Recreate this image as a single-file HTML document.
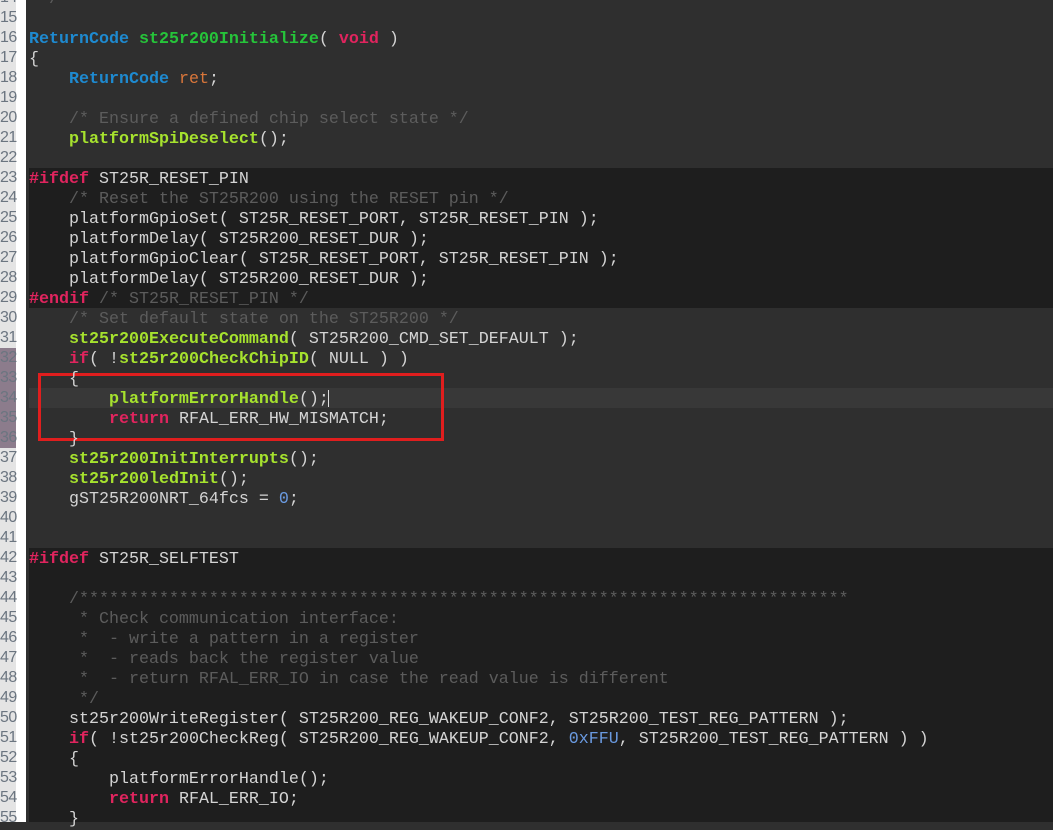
<!DOCTYPE html><html><head><style>
body{margin:0;width:1053px;height:822px;overflow:hidden;background:#2f2f2f;position:relative;font-family:"Liberation Mono",monospace;font-size:16.67px}
.g{position:absolute;left:0;top:0;width:16px;height:822px;background:#e4e4e4}
.w{position:absolute;left:16px;top:0;width:10px;height:822px;background:#fff}
.l{position:absolute;left:0;height:20px;line-height:20px;width:1053px;white-space:pre}
.n{position:absolute;left:0;top:0;width:17px;color:#6b7580;font-family:"Liberation Sans",sans-serif;font-size:16px;letter-spacing:-0.5px;overflow:hidden}
.c{position:absolute;left:29px;top:2px;color:#d4d4d4}
.dk{position:absolute;left:29px;width:1024px;background:#1e1e1e}
.p{color:#a6e22e;font-weight:bold}.t{color:#1e8ad0;font-weight:bold}.f{color:#26c43a;font-weight:bold}.k{color:#e0245e;font-weight:bold}.v{color:#d9763a}.m{color:#5c5c5c}.o{color:#6a9ae0}
</style></head><body>
<div class="g"></div><div class="w"></div>
<div class="dk" style="top:168px;height:140px"></div>
<div class="dk" style="top:548px;height:274px"></div>
<div style="position:absolute;left:29px;top:388px;width:1024px;height:20px;background:#383838"></div>
<div style="position:absolute;left:0;top:348px;width:16px;height:100px;background:#8c7c8c"></div>
<div style="position:absolute;left:38px;top:373px;width:400px;height:62px;border:3px solid #e01e1e"></div>
<div style="position:absolute;left:328px;top:390px;width:1px;height:17px;background:#ddd"></div>
<div id="x"></div>
<script>
var L=[
[14,'<span class="m"> */</span>'],[15,''],
[16,'<span class="t">ReturnCode</span> <span class="f">st25r200Initialize</span>( <span class="k">void</span> )'],
[17,'{'],[18,'    <span class="t">ReturnCode</span> <span class="v">ret</span>;'],[19,''],
[20,'    <span class="m">/* Ensure a defined chip select state */</span>'],
[21,'    <span class="p">platformSpiDeselect</span>();'],[22,''],
[23,'<span class="k">#ifdef</span> ST25R_RESET_PIN'],
[24,'    <span class="m">/* Reset the ST25R200 using the RESET pin */</span>'],
[25,'    platformGpioSet( ST25R_RESET_PORT, ST25R_RESET_PIN );'],
[26,'    platformDelay( ST25R200_RESET_DUR );'],
[27,'    platformGpioClear( ST25R_RESET_PORT, ST25R_RESET_PIN );'],
[28,'    platformDelay( ST25R200_RESET_DUR );'],
[29,'<span class="k">#endif</span> <span class="m">/* ST25R_RESET_PIN */</span>'],
[30,'    <span class="m">/* Set default state on the ST25R200 */</span>'],
[31,'    <span class="p">st25r200ExecuteCommand</span>( ST25R200_CMD_SET_DEFAULT );'],
[32,'    <span class="k">if</span>( !<span class="p">st25r200CheckChipID</span>( NULL ) )'],
[33,'    {'],[34,'        <span class="p">platformErrorHandle</span>();'],
[35,'        <span class="k">return</span> RFAL_ERR_HW_MISMATCH;'],[36,'    }'],
[37,'    <span class="p">st25r200InitInterrupts</span>();'],
[38,'    <span class="p">st25r200ledInit</span>();'],
[39,'    gST25R200NRT_64fcs = <span class="o">0</span>;'],[40,''],[41,''],
[42,'<span class="k">#ifdef</span> ST25R_SELFTEST'],[43,''],
[44,'    <span class="m">/*****************************************************************************</span>'],
[45,'<span class="m">     * Check communication interface:</span>'],
[46,'<span class="m">     *  - write a pattern in a register</span>'],
[47,'<span class="m">     *  - reads back the register value</span>'],
[48,'<span class="m">     *  - return RFAL_ERR_IO in case the read value is different</span>'],
[49,'<span class="m">     */</span>'],
[50,'    st25r200WriteRegister( ST25R200_REG_WAKEUP_CONF2, ST25R200_TEST_REG_PATTERN );'],
[51,'    <span class="k">if</span>( !st25r200CheckReg( ST25R200_REG_WAKEUP_CONF2, <span class="o">0xFFU</span>, ST25R200_TEST_REG_PATTERN ) )'],
[52,'    {'],[53,'        platformErrorHandle();'],[54,'        <span class="k">return</span> RFAL_ERR_IO;'],[55,'    }']];
var h='';L.forEach(function(a){var t=28+(a[0]-16)*20;h+='<div class="l" style="top:'+t+'px"><span class="n">'+a[0]+'</span><span class="c">'+a[1]+'</span></div>';});
document.getElementById('x').innerHTML=h;
</script>
</body></html>
